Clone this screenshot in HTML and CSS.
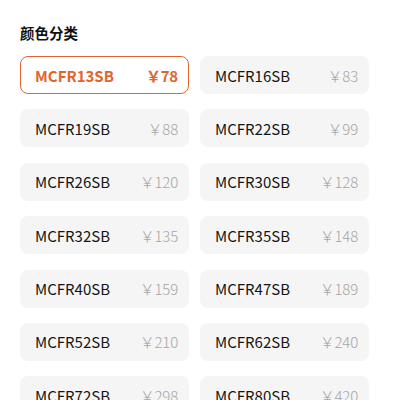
FILE: index.html
```html
<!DOCTYPE html>
<html lang="zh">
<head>
<meta charset="utf-8">
<link rel="stylesheet" href="styles.css">
</head>
<body>
<div class="page">
  <h2 class="title">颜色分类</h2>
  <div class="grid">
    <div class="opt selected"><span class="name">MCFR13SB</span><span class="price">￥78</span></div>
    <div class="opt"><span class="name">MCFR16SB</span><span class="price">￥83</span></div>
    <div class="opt"><span class="name">MCFR19SB</span><span class="price">￥88</span></div>
    <div class="opt"><span class="name">MCFR22SB</span><span class="price">￥99</span></div>
    <div class="opt"><span class="name">MCFR26SB</span><span class="price">￥120</span></div>
    <div class="opt"><span class="name">MCFR30SB</span><span class="price">￥128</span></div>
    <div class="opt"><span class="name">MCFR32SB</span><span class="price">￥135</span></div>
    <div class="opt"><span class="name">MCFR35SB</span><span class="price">￥148</span></div>
    <div class="opt"><span class="name">MCFR40SB</span><span class="price">￥159</span></div>
    <div class="opt"><span class="name">MCFR47SB</span><span class="price">￥189</span></div>
    <div class="opt"><span class="name">MCFR52SB</span><span class="price">￥210</span></div>
    <div class="opt"><span class="name">MCFR62SB</span><span class="price">￥240</span></div>
    <div class="opt"><span class="name">MCFR72SB</span><span class="price">￥298</span></div>
    <div class="opt"><span class="name">MCFR80SB</span><span class="price">￥420</span></div>
  </div>
</div>
</body>
</html>
```
FILE: styles.css
```css
html, body {
  margin: 0;
  padding: 0;
  background: #ffffff;
  overflow: hidden;
}
.page {
  padding: 23px 31px 0 20px;
  font-family: "Noto Sans CJK SC", "Noto Sans", sans-serif;
  color: #111;
}
.title {
  margin: 0 0 13px 0;
  font-size: 14.5px;
  font-weight: 700;
  line-height: 20px;
  color: #111;
}
.grid {
  display: grid;
  grid-template-columns: 1fr 1fr;
  column-gap: 11px;
  row-gap: 15.4px;
}
.opt {
  height: 38px;
  box-sizing: border-box;
  background: #f5f5f5;
  border-radius: 8px;
  display: flex;
  align-items: center;
  justify-content: space-between;
  padding: 0 11px 0 15px;
  font-size: 15px;
}
.name {
  color: #151515;
}
.price {
  color: #a6a6a6;
  font-weight: 300;
  letter-spacing: -0.2px;
}
.opt.selected {
  background: #ffffff;
  border: 1.5px solid #e0662d;
  padding: 0 10px 0 14px;
}
.opt.selected .name,
.opt.selected .price {
  color: #e0652b;
  font-weight: 700;
}
```
